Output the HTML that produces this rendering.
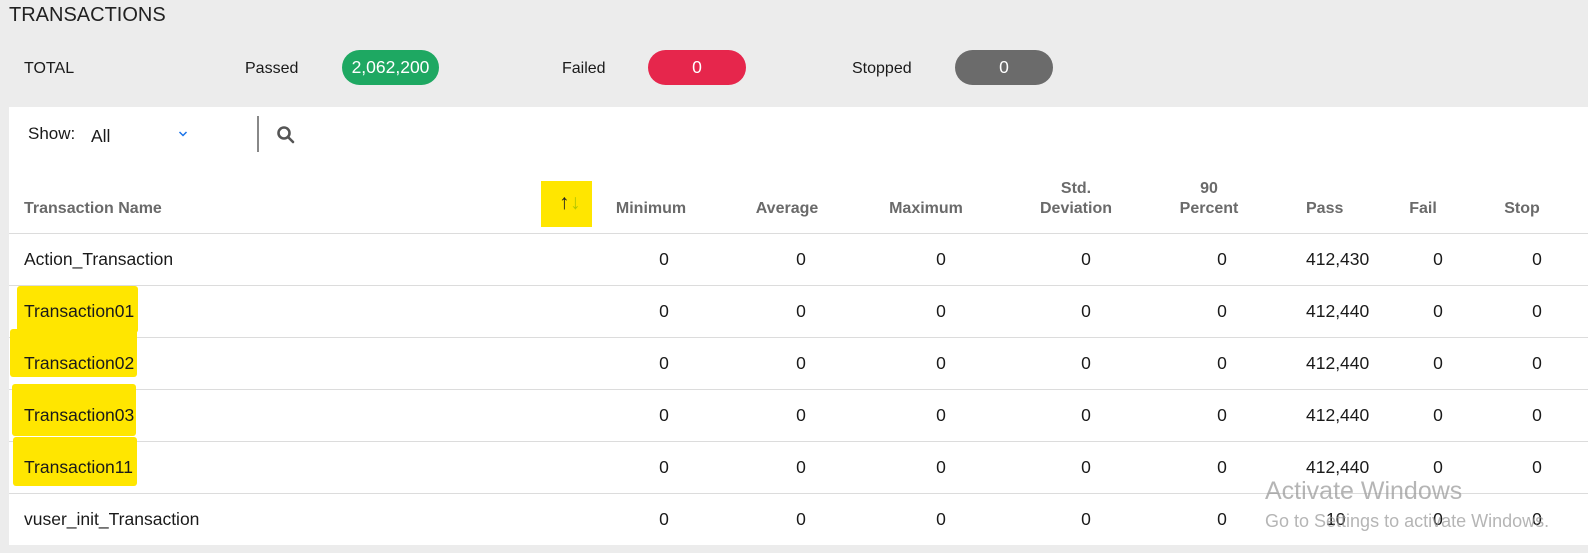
<!DOCTYPE html>
<html><head><meta charset="utf-8"><style>
*{margin:0;padding:0;box-sizing:border-box}
body{width:1588px;height:553px;background:#ececec;font-family:"Liberation Sans",Arial,sans-serif;position:relative;overflow:hidden;color:#1a1a1a}
.a{position:absolute;white-space:nowrap}
.pill{position:absolute;top:50px;height:35px;border-radius:18px;color:#fff;font-size:17.5px;line-height:35px;text-align:center}
.panel{position:absolute;left:9px;top:107px;right:0;height:438px;background:#fff}
.hl{position:absolute;left:9px;right:0;height:1px;background:#dcdcdc}
.h{font-size:16px;font-weight:bold;color:#6a6a6a;text-align:center;line-height:20px;width:140px}
.v{font-size:17.5px}
.n{font-size:17.5px;width:60px;text-align:center}
.y{position:absolute;background:#ffe600}
</style></head><body>
<div class="a" style="left:9px;top:4px;font-size:20px;color:#222">TRANSACTIONS</div>
<div class="a" style="left:24px;top:60px;font-size:16px">TOTAL</div>
<div class="a" style="left:245px;top:60px;font-size:16px">Passed</div>
<div class="pill" style="left:342px;width:97px;background:#1ea862">2,062,200</div>
<div class="a" style="left:562px;top:60px;font-size:16px">Failed</div>
<div class="pill" style="left:648px;width:98px;background:#e6264c">0</div>
<div class="a" style="left:852px;top:60px;font-size:16px">Stopped</div>
<div class="pill" style="left:955px;width:98px;background:#6b6b6b">0</div>
<div class="panel"></div>
<div class="a" style="left:28px;top:124px;font-size:17px">Show:</div>
<div class="a" style="left:91px;top:126px;font-size:17.5px">All</div>
<svg class="a" style="left:178px;top:130px" width="10" height="8"><path d="M1.5 2 L5 5.5 L8.5 2" fill="none" stroke="#1a73e8" stroke-width="1.5"/></svg>
<div class="a" style="left:257px;top:116px;width:2px;height:36px;background:#888"></div>
<svg class="a" style="left:276px;top:125px" width="22" height="22"><circle cx="8" cy="8" r="5.5" fill="none" stroke="#555" stroke-width="2.6"/><path d="M12 12 L17 17" stroke="#555" stroke-width="2.6" stroke-linecap="round"/></svg>
<div class="y" style="left:541px;top:181px;width:51px;height:46px"></div>
<div class="a" style="left:559px;top:191px;font-size:21px;color:#222">↑</div>
<div class="a" style="left:570px;top:191px;font-size:21px;color:#b5c600">↓</div>
<div class="a h" style="left:24px;top:199px;width:auto;text-align:left">Transaction Name</div>
<div class="a h" style="left:581px;top:199px">Minimum</div>
<div class="a h" style="left:717px;top:199px">Average</div>
<div class="a h" style="left:856px;top:199px">Maximum</div>
<div class="a h" style="left:1006px;top:179px">Std.<br>Deviation</div>
<div class="a h" style="left:1139px;top:179px">90<br>Percent</div>
<div class="a h" style="left:1306px;top:199px;width:auto">Pass</div>
<div class="a h" style="left:1353px;top:199px">Fail</div>
<div class="a h" style="left:1452px;top:199px">Stop</div>
<div class="hl" style="top:233px"></div>
<div class="hl" style="top:285px"></div>
<div class="hl" style="top:337px"></div>
<div class="hl" style="top:389px"></div>
<div class="hl" style="top:441px"></div>
<div class="hl" style="top:493px"></div>
<div class="y" style="left:17px;top:286px;width:121px;height:47px;border-radius:3px"></div>
<div class="y" style="left:10px;top:329px;width:127px;height:48px;border-radius:3px"></div>
<div class="y" style="left:12px;top:384px;width:124px;height:52px;border-radius:3px"></div>
<div class="y" style="left:13px;top:437px;width:124px;height:49px;border-radius:3px"></div>
<div class="a v" style="left:24px;top:249px">Action_Transaction</div>
<div class="a v" style="left:24px;top:301px">Transaction01</div>
<div class="a v" style="left:24px;top:353px">Transaction02</div>
<div class="a v" style="left:24px;top:405px">Transaction03</div>
<div class="a v" style="left:24px;top:457px">Transaction11</div>
<div class="a v" style="left:24px;top:509px">vuser_init_Transaction</div>

<div class="a n" style="left:634px;top:249px">0</div><div class="a n" style="left:771px;top:249px">0</div><div class="a n" style="left:911px;top:249px">0</div><div class="a n" style="left:1056px;top:249px">0</div><div class="a n" style="left:1192px;top:249px">0</div><div class="a v" style="left:1306px;top:249px">412,430</div><div class="a n" style="left:1408px;top:249px">0</div><div class="a n" style="left:1507px;top:249px">0</div>
<div class="a n" style="left:634px;top:301px">0</div><div class="a n" style="left:771px;top:301px">0</div><div class="a n" style="left:911px;top:301px">0</div><div class="a n" style="left:1056px;top:301px">0</div><div class="a n" style="left:1192px;top:301px">0</div><div class="a v" style="left:1306px;top:301px">412,440</div><div class="a n" style="left:1408px;top:301px">0</div><div class="a n" style="left:1507px;top:301px">0</div>
<div class="a n" style="left:634px;top:353px">0</div><div class="a n" style="left:771px;top:353px">0</div><div class="a n" style="left:911px;top:353px">0</div><div class="a n" style="left:1056px;top:353px">0</div><div class="a n" style="left:1192px;top:353px">0</div><div class="a v" style="left:1306px;top:353px">412,440</div><div class="a n" style="left:1408px;top:353px">0</div><div class="a n" style="left:1507px;top:353px">0</div>
<div class="a n" style="left:634px;top:405px">0</div><div class="a n" style="left:771px;top:405px">0</div><div class="a n" style="left:911px;top:405px">0</div><div class="a n" style="left:1056px;top:405px">0</div><div class="a n" style="left:1192px;top:405px">0</div><div class="a v" style="left:1306px;top:405px">412,440</div><div class="a n" style="left:1408px;top:405px">0</div><div class="a n" style="left:1507px;top:405px">0</div>
<div class="a n" style="left:634px;top:457px">0</div><div class="a n" style="left:771px;top:457px">0</div><div class="a n" style="left:911px;top:457px">0</div><div class="a n" style="left:1056px;top:457px">0</div><div class="a n" style="left:1192px;top:457px">0</div><div class="a v" style="left:1306px;top:457px">412,440</div><div class="a n" style="left:1408px;top:457px">0</div><div class="a n" style="left:1507px;top:457px">0</div>
<div class="a n" style="left:634px;top:509px">0</div><div class="a n" style="left:771px;top:509px">0</div><div class="a n" style="left:911px;top:509px">0</div><div class="a n" style="left:1056px;top:509px">0</div><div class="a n" style="left:1192px;top:509px">0</div><div class="a v" style="left:1326px;top:509px">10</div><div class="a n" style="left:1408px;top:509px">0</div><div class="a n" style="left:1507px;top:509px">0</div>

<div class="a" style="left:1265px;top:477px;font-size:25px;color:rgba(150,150,150,0.7)">Activate Windows</div>
<div class="a" style="left:1265px;top:511px;font-size:18px;color:rgba(150,150,150,0.7)">Go to Settings to activate Windows.</div>
</body></html>
